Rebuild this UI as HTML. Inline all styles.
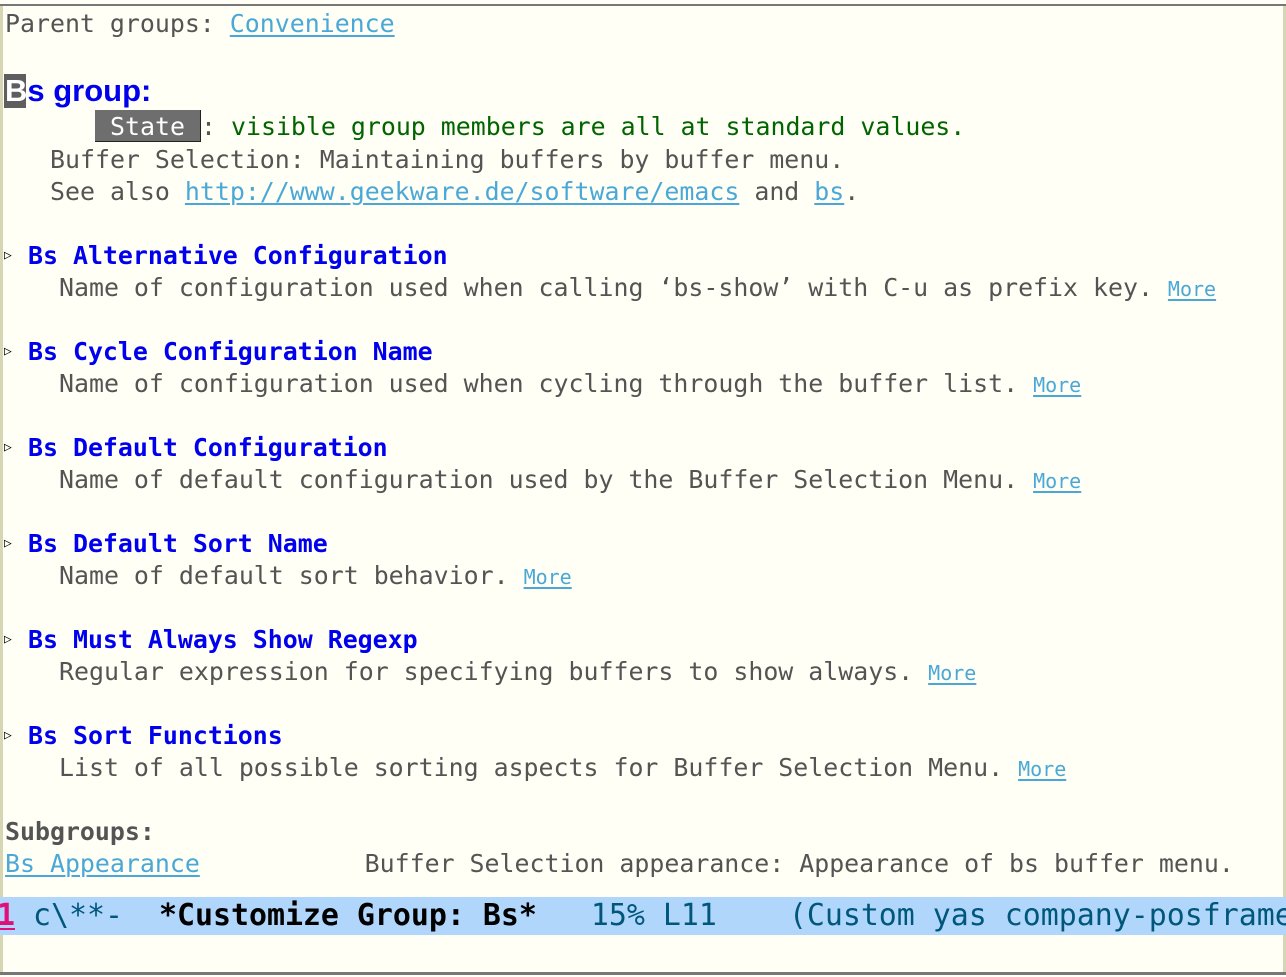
<!DOCTYPE html>
<html><head><meta charset="utf-8"><style>
html,body{margin:0;padding:0}
body{width:1286px;height:977px;background:#fffff5;position:relative;overflow:hidden;font-family:"DejaVu Sans Mono","Liberation Mono",monospace;font-size:24.9px;color:#545454}
.l{position:absolute;white-space:pre;line-height:32px;height:32px}
a{color:#4aa8d8;text-decoration:underline;text-decoration-thickness:1.5px;text-underline-offset:3px}
.h{color:#0000ee;font-weight:bold}
.t{position:absolute;left:4px;font-size:13px;color:#000;line-height:32px}
.m{color:#4aa8d8;font-size:20px;text-decoration:underline;text-underline-offset:3px}
</style></head><body>
<div style="position:absolute;left:0;top:4px;width:1286px;height:2px;background:#777"></div>
<div style="position:absolute;left:0;top:6px;width:3px;height:967px;background:#d6d6b4"></div>
<div style="position:absolute;right:0;top:6px;width:3px;height:967px;background:#d6d6b4"></div>
<div style="position:absolute;left:0;top:972px;width:1286px;height:3px;background:#777"></div>

<div class="l" style="left:5px;top:8px">Parent groups: <a>Convenience</a></div>

<div style="position:absolute;left:4px;top:74px;width:22px;height:34px;background:#5e5e5e"></div>
<div class="l" style="left:5px;top:73px;font-family:'Liberation Sans',sans-serif;font-weight:bold;font-size:31px;line-height:36px;height:36px;color:#0000ee"><span style="color:#fff">B</span>s group:</div>

<div style="position:absolute;left:95px;top:110px;width:106px;height:32px;background:#6e6e6e;border-right:1px solid #222;border-bottom:1px solid #222;box-sizing:border-box"></div>
<div class="l" style="left:110px;top:111px;color:#fff">State</div>
<div class="l" style="left:201px;top:111px;color:#006400"><span style="color:#545454">:</span> visible group members are all at standard values.</div>
<div class="l" style="left:50px;top:144px">Buffer Selection: Maintaining buffers by buffer menu.</div>
<div class="l" style="left:50px;top:176px">See also <a>http://www.geekware.de/software/emacs</a> and <a>bs</a>.</div>

<div class="t" style="top:240px">&#9655;</div>
<div class="l h" style="left:28px;top:240px">Bs Alternative Configuration</div>
<div class="l" style="left:59px;top:272px">Name of configuration used when calling ‘bs-show’ with C-u as prefix key. <span class="m">More</span></div>

<div class="t" style="top:336px">&#9655;</div>
<div class="l h" style="left:28px;top:336px">Bs Cycle Configuration Name</div>
<div class="l" style="left:59px;top:368px">Name of configuration used when cycling through the buffer list. <span class="m">More</span></div>

<div class="t" style="top:432px">&#9655;</div>
<div class="l h" style="left:28px;top:432px">Bs Default Configuration</div>
<div class="l" style="left:59px;top:464px">Name of default configuration used by the Buffer Selection Menu. <span class="m">More</span></div>

<div class="t" style="top:528px">&#9655;</div>
<div class="l h" style="left:28px;top:528px">Bs Default Sort Name</div>
<div class="l" style="left:59px;top:560px">Name of default sort behavior. <span class="m">More</span></div>

<div class="t" style="top:624px">&#9655;</div>
<div class="l h" style="left:28px;top:624px">Bs Must Always Show Regexp</div>
<div class="l" style="left:59px;top:656px">Regular expression for specifying buffers to show always. <span class="m">More</span></div>

<div class="t" style="top:720px">&#9655;</div>
<div class="l h" style="left:28px;top:720px">Bs Sort Functions</div>
<div class="l" style="left:59px;top:752px">List of all possible sorting aspects for Buffer Selection Menu. <span class="m">More</span></div>

<div class="l" style="left:5px;top:816px;font-weight:bold">Subgroups:</div>
<div class="l" style="left:5px;top:848px"><a>Bs Appearance</a>           Buffer Selection appearance: Appearance of bs buffer menu.</div>

<div style="position:absolute;left:0;top:897px;width:1286px;height:38px;background:#b0d6fc"></div>
<div class="l" style="left:-3px;top:897px;font-size:29.9px;line-height:38px;height:38px;color:#00577a"><span style="color:#e0107a;font-weight:bold;text-decoration:underline;text-underline-offset:3px">1</span> c\**-  <b style="color:#000">*Customize Group: Bs*</b>   15% L11    (Custom yas company-posframe</div>
</body></html>
